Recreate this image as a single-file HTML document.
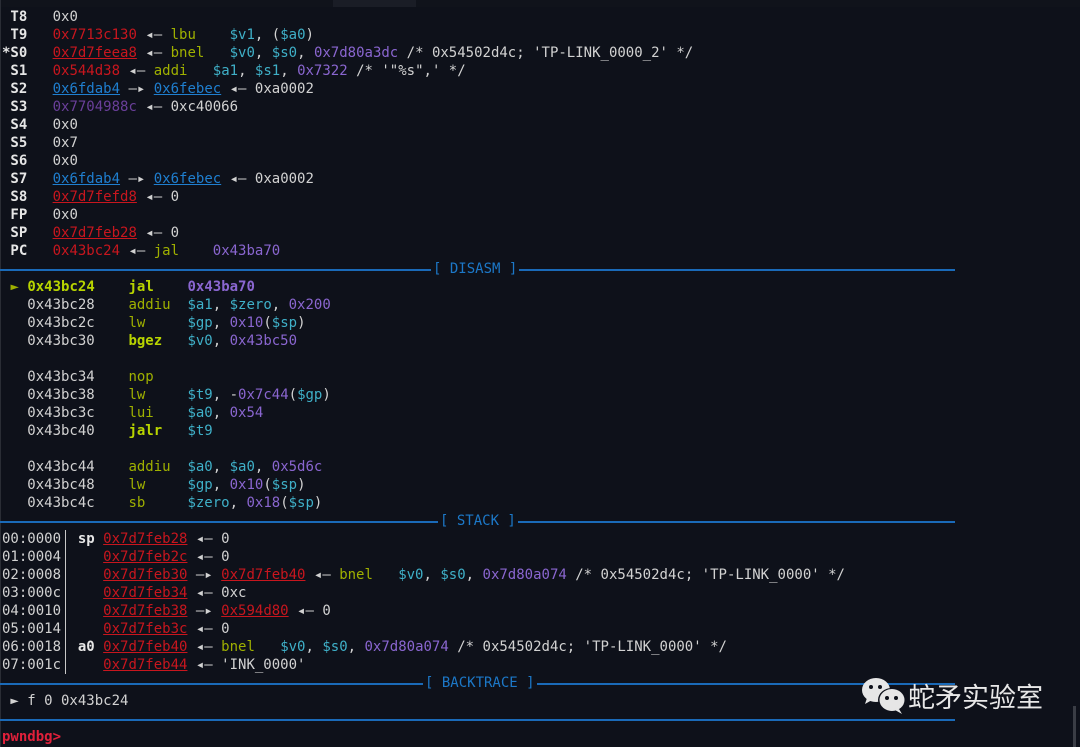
<!DOCTYPE html>
<html><head><meta charset="utf-8">
<style>
html,body{margin:0;padding:0;background:#0e111a;}
body{width:1080px;height:747px;position:relative;overflow:hidden;}
pre{position:absolute;left:2px;top:8px;margin:0;font-family:"DejaVu Sans Mono","Liberation Mono",monospace;font-size:14px;line-height:18px;color:#d2d2d2;white-space:pre;}
.b{font-weight:bold;color:#e6e6e6}
.r{color:#c8161e}
.ru{color:#c8161e;text-decoration:underline}
.bl{color:#1f7fd0;text-decoration:underline}
.p{color:#8a66d0}
.pd{color:#6a3f9a}
.g{color:#9fb000}
.gb{color:#b8d400;font-weight:bold}
.c{color:#3fb0c8}
.sep{display:inline-block;position:relative;width:953px;height:18px;vertical-align:top;}
.sep:before{content:"";position:absolute;left:-2px;right:0;top:9px;height:2px;background:#1a6ab8;}
.sep span{position:absolute;top:0;background:#0e111a;color:#1c78c8;padding:0 2px;}
.top{position:absolute;left:0;top:0;width:1080px;height:7px;background:#10131b;}
.tab{position:absolute;left:333px;top:0;width:83px;height:7px;background:#1a1d26;}
.vb{position:absolute;left:0;top:0;width:1px;height:747px;background:#2a2d35;}
.vl{position:absolute;left:65px;top:530px;width:1px;height:144px;background:#c8c8c8;}
.wm{position:absolute;left:908px;top:679px;font-family:"Noto Sans CJK SC",sans-serif;font-size:27px;color:#e8e8e8;line-height:34px;}
.sb{position:absolute;left:1073px;top:706px;width:3px;height:41px;background:#3a3d45;}
</style></head><body>
<div class="top"></div><div class="tab"></div><div class="vb"></div>
<pre><span class="b"> T8</span>   0x0
<span class="b"> T9</span>   <span class="r">0x7713c130</span> ◂— <span class="g">lbu</span>    <span class="c">$v1</span>, (<span class="c">$a0</span>)
<span class="b">*S0</span>   <span class="ru">0x7d7feea8</span> ◂— <span class="g">bnel</span>   <span class="c">$v0</span>, <span class="c">$s0</span>, <span class="p">0x7d80a3dc</span> /* 0x54502d4c; 'TP-LINK_0000_2' */
<span class="b"> S1</span>   <span class="r">0x544d38</span> ◂— <span class="g">addi</span>   <span class="c">$a1</span>, <span class="c">$s1</span>, <span class="p">0x7322</span> /* '"%s",' */
<span class="b"> S2</span>   <span class="bl">0x6fdab4</span> —▸ <span class="bl">0x6febec</span> ◂— 0xa0002
<span class="b"> S3</span>   <span class="pd">0x7704988c</span> ◂— 0xc40066
<span class="b"> S4</span>   0x0
<span class="b"> S5</span>   0x7
<span class="b"> S6</span>   0x0
<span class="b"> S7</span>   <span class="bl">0x6fdab4</span> —▸ <span class="bl">0x6febec</span> ◂— 0xa0002
<span class="b"> S8</span>   <span class="ru">0x7d7fefd8</span> ◂— 0
<span class="b"> FP</span>   0x0
<span class="b"> SP</span>   <span class="ru">0x7d7feb28</span> ◂— 0
<span class="b"> PC</span>   <span class="r">0x43bc24</span> ◂— <span class="g">jal</span>    <span class="p">0x43ba70</span>
<span class="sep"><span style="left:429px">[ DISASM ]</span></span>
 <span class="g">►</span> <span class="gb">0x43bc24</span>    <span class="gb">jal</span>    <span class="p" style="font-weight:bold">0x43ba70</span>
   0x43bc28    <span class="g">addiu</span>  <span class="c">$a1</span>, <span class="c">$zero</span>, <span class="p">0x200</span>
   0x43bc2c    <span class="g">lw</span>     <span class="c">$gp</span>, <span class="p">0x10</span>(<span class="c">$sp</span>)
   0x43bc30    <span class="gb">bgez</span>   <span class="c">$v0</span>, <span class="p">0x43bc50</span>

   0x43bc34    <span class="g">nop</span>
   0x43bc38    <span class="g">lw</span>     <span class="c">$t9</span>, -<span class="p">0x7c44</span>(<span class="c">$gp</span>)
   0x43bc3c    <span class="g">lui</span>    <span class="c">$a0</span>, <span class="p">0x54</span>
   0x43bc40    <span class="gb">jalr</span>   <span class="c">$t9</span>

   0x43bc44    <span class="g">addiu</span>  <span class="c">$a0</span>, <span class="c">$a0</span>, <span class="p">0x5d6c</span>
   0x43bc48    <span class="g">lw</span>     <span class="c">$gp</span>, <span class="p">0x10</span>(<span class="c">$sp</span>)
   0x43bc4c    <span class="g">sb</span>     <span class="c">$zero</span>, <span class="p">0x18</span>(<span class="c">$sp</span>)
<span class="sep"><span style="left:436px">[ STACK ]</span></span>
00:0000  <span class="b">sp</span> <span class="ru">0x7d7feb28</span> ◂— 0
01:0004     <span class="ru">0x7d7feb2c</span> ◂— 0
02:0008     <span class="ru">0x7d7feb30</span> —▸ <span class="ru">0x7d7feb40</span> ◂— <span class="g">bnel</span>   <span class="c">$v0</span>, <span class="c">$s0</span>, <span class="p">0x7d80a074</span> /* 0x54502d4c; 'TP-LINK_0000' */
03:000c     <span class="ru">0x7d7feb34</span> ◂— 0xc
04:0010     <span class="ru">0x7d7feb38</span> —▸ <span class="ru">0x594d80</span> ◂— 0
05:0014     <span class="ru">0x7d7feb3c</span> ◂— 0
06:0018  <span class="b">a0</span> <span class="ru">0x7d7feb40</span> ◂— <span class="g">bnel</span>   <span class="c">$v0</span>, <span class="c">$s0</span>, <span class="p">0x7d80a074</span> /* 0x54502d4c; 'TP-LINK_0000' */
07:001c     <span class="ru">0x7d7feb44</span> ◂— 'INK_0000'
<span class="sep"><span style="left:421px">[ BACKTRACE ]</span></span>
 ► f 0 0x43bc24
<span class="sep"></span>
<span style="color:#e0203a;font-weight:bold">pwndbg&gt;</span></pre>
<div class="vl"></div>
<svg style="position:absolute;left:861px;top:677px" width="46" height="38" viewBox="0 0 46 38">
<ellipse cx="15" cy="13" rx="14" ry="12" fill="#e6e6e6"/>
<path d="M6 21 L4 27 L11 23 Z" fill="#e6e6e6"/>
<circle cx="10" cy="10" r="2" fill="#0e111a"/><circle cx="19" cy="10" r="2" fill="#0e111a"/>
<ellipse cx="31" cy="23" rx="14" ry="12" fill="#0e111a"/>
<ellipse cx="31" cy="23" rx="12.5" ry="11" fill="#e6e6e6"/>
<path d="M38 32 L41 37 L34 33 Z" fill="#e6e6e6"/>
<circle cx="26" cy="21" r="2" fill="#0e111a"/><circle cx="35" cy="21" r="2" fill="#0e111a"/>
</svg>
<div class="wm">蛇矛实验室</div>
<div class="sb"></div>
</body></html>
